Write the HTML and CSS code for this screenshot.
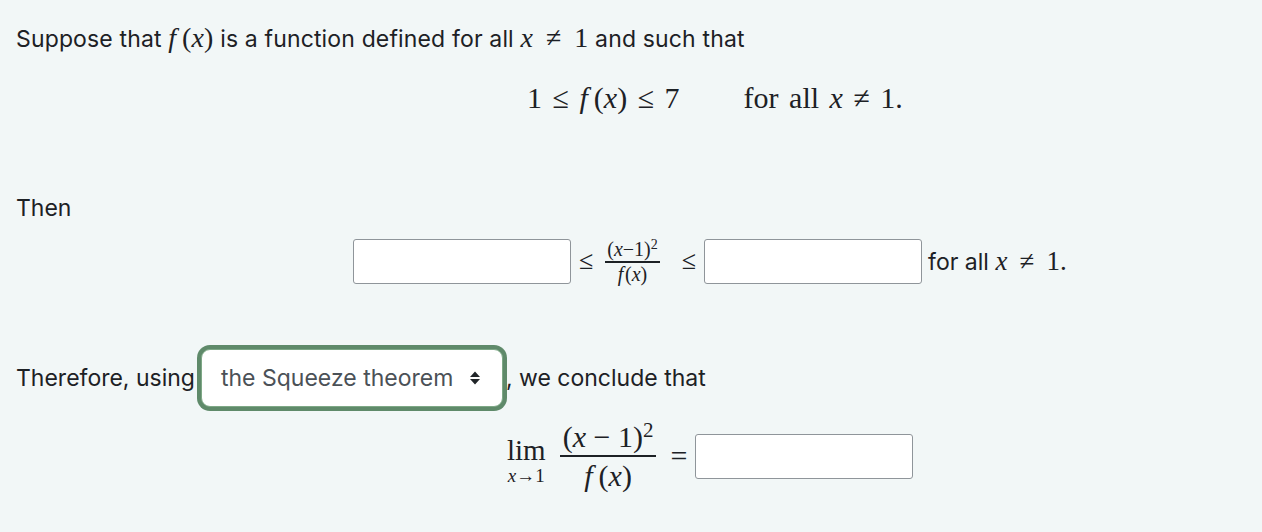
FILE: index.html
```html
<!DOCTYPE html>
<html>
<head>
<meta charset="utf-8">
<link rel="stylesheet" href="styles.css">
</head>
<body>
<div class="page">
  <p class="line l1">Suppose that <span class="m"><i>f</i>&#8201;(<i>x</i>)</span> is a function defined for all <span class="m"><i>x</i>&#8201; ≠ &#8201;1</span> and such that</p>
  <div class="disp d1">
    <span class="m big">1 ≤ <i>f</i>&#8201;(<i>x</i>) ≤ 7</span>
    <span class="m big forall">for all <i>x</i> ≠ 1.</span>
  </div>
  <p class="line then">Then</p>
  <div class="row r2">
    <span class="box"></span>
    <span class="m rel">≤</span>
    <span class="frac small">
      <span class="num">(<i>x</i>−1)<sup>2</sup></span>
      <span class="den"><i>f</i>&#8202;(<i>x</i>)</span>
    </span>
    <span class="m rel rel2">≤</span>
    <span class="box"></span>
    <span class="tail">for all <span class="m"><i>x</i>&#8201; ≠ &#8201;1.</span></span>
  </div>
  <div class="row r3">
    <span>Therefore, using</span>
    <span class="select"><span class="sel-text">the Squeeze theorem</span><svg class="arrows" width="12" height="16" viewBox="0 0 12 16"><path d="M6 1.5 L11 7 H1 Z M6 14.5 L11 9 H1 Z" fill="#212529"/></svg></span>
    <span>, we conclude that</span>
  </div>
  <div class="row r4">
    <span class="lim">
      <span class="limw">lim</span>
      <span class="limsub"><i>x</i>→1</span>
    </span>
    <span class="frac bigfrac">
      <span class="num">(<i>x</i> − 1)<sup>2</sup></span>
      <span class="den"><i>f</i>&#8201;(<i>x</i>)</span>
    </span>
    <span class="m eq">=</span>
    <span class="box"></span>
  </div>
</div>
</body>
</html>
```
FILE: styles.css
```css
html, body {
  margin: 0;
  padding: 0;
  background: #f2f7f7;
}
.page {
  padding: 0 0 0 16px;
  font-family: Inter, "Liberation Sans", sans-serif;
  font-size: 23px;
  color: #1d2125;
  height: 532px;
  box-sizing: border-box;
}
.line {
  margin: 0;
  line-height: 30px;
}
.l1 {
  padding-top: 23px;
  letter-spacing: 0.15px;
}
.m {
  font-family: "Liberation Serif", serif;
  font-size: 28px;
}
.m i, .frac i, .lim i {
  font-style: italic;
}
.disp {
  display: flex;
  align-items: center;
  height: 34px;
  margin-top: 27px;
  padding-left: 511px;
}
.big {
  font-size: 30px;
  word-spacing: 3px;
}
.forall {
  margin-left: 64px;
}
.then {
  margin-top: 78px;
}
.row {
  display: flex;
  align-items: center;
}
.r2 {
  margin-top: 15px;
  padding-left: 337px;
  height: 46px;
}
.box {
  display: inline-block;
  width: 216px;
  height: 43px;
  background: #fff;
  border: 1px solid #8f959a;
  border-radius: 3px;
}
.rel {
  margin: 0 8px 0 8px;
  font-size: 26px;
}
.rel2 {
  margin: 0 8px 0 22px;
}
.frac {
  display: inline-flex;
  flex-direction: column;
  align-items: center;
  font-family: "Liberation Serif", serif;
  line-height: 1;
}
.frac .num {
  padding: 0 2px 2px;
  border-bottom: 2px solid #1d2125;
}
.frac sup {
  font-size: 0.7em;
  vertical-align: 0.5em;
  line-height: 0;
}
.small {
  font-size: 20px;
  margin-left: 4px;
}
.small .den {
  padding-top: 1px;
}
.tail {
  margin-left: 6px;
}
.tail .m {
  font-size: 27px;
}
.r3 {
  margin-top: 65px;
  height: 58px;
}
.select {
  display: inline-flex;
  align-items: center;
  box-sizing: border-box;
  width: 302px;
  height: 58px;
  margin-left: 6px;
  margin-right: 3px;
  background: #fff;
  border: 1px solid #7ea886;
  border-radius: 9px;
  box-shadow: 0 0 0 4px #5f8a6a;
  padding-left: 19px;
  color: #4b5157;
}
.arrows {
  margin-left: 16px;
}
.r4 {
  margin-top: 9px;
  padding-left: 491px;
  height: 80px;
}
.lim {
  display: inline-flex;
  flex-direction: column;
  align-items: center;
  font-family: "Liberation Serif", serif;
  line-height: 1;
  margin-top: 8px;
}
.limw {
  font-size: 29px;
}
.limsub {
  font-size: 19px;
  margin-top: 1px;
}
.bigfrac {
  font-size: 30px;
  margin-left: 14px;
}
.bigfrac .num {
  padding: 0 3px 3px;
}
.bigfrac .den {
  padding-top: 4px;
}
.eq {
  margin: 0 8px 0 14px;
  font-size: 30px;
}
```
